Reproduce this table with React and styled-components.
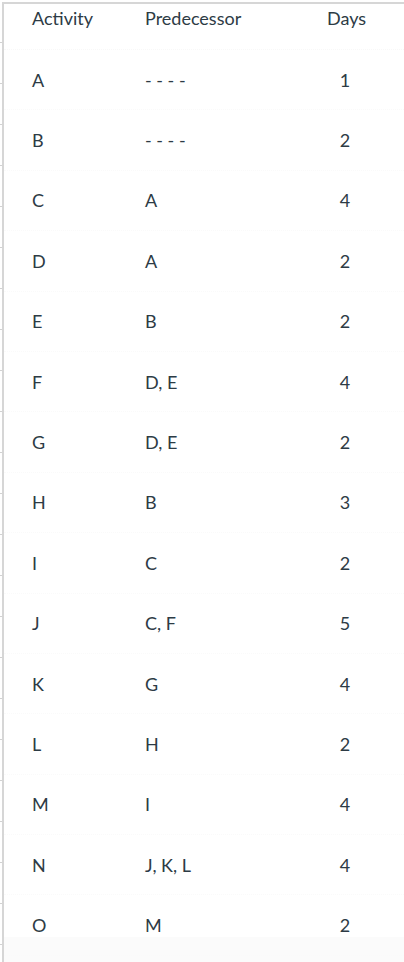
import React from "react";
import styled, { createGlobalStyle } from "styled-components";

const rows = [
  { activity: "A", pred: "- - - -", days: 1 },
  { activity: "B", pred: "- - - -", days: 2 },
  { activity: "C", pred: "A", days: 4 },
  { activity: "D", pred: "A", days: 2 },
  { activity: "E", pred: "B", days: 2 },
  { activity: "F", pred: "D, E", days: 4 },
  { activity: "G", pred: "D, E", days: 2 },
  { activity: "H", pred: "B", days: 3 },
  { activity: "I", pred: "C", days: 2 },
  { activity: "J", pred: "C, F", days: 5 },
  { activity: "K", pred: "G", days: 4 },
  { activity: "L", pred: "H", days: 2 },
  { activity: "M", pred: "I", days: 4 },
  { activity: "N", pred: "J, K, L", days: 4 },
  { activity: "O", pred: "M", days: 2 },
];

export default function App() {
  return (
    <>
      <GlobalStyle />
      <Page>
        <Gutter />
        <Frame>
          <Table>
            <HeadRow>
              <Cell $first>Activity</Cell>
              <Cell>Predecessor</Cell>
              <Cell>Days</Cell>
            </HeadRow>
            {rows.map((row) => (
              <Row key={row.activity}>
                <Cell $first>{row.activity}</Cell>
                <Cell>{row.pred}</Cell>
                <DaysCell>{row.days}</DaysCell>
              </Row>
            ))}
          </Table>
        </Frame>
      </Page>
    </>
  );
}

const GlobalStyle = createGlobalStyle`
  html, body {
    margin: 0;
    padding: 0;
    background: #fff;
  }
  body {
    font-family: Lato, "Open Sans", "Liberation Sans", sans-serif;
    color: #2d3b45;
  }
`;

const Page = styled.div`
  display: flex;
  height: 962px;
  padding-top: 2px;
  box-sizing: border-box;
  overflow: hidden;
`;

const Gutter = styled.div`
  width: 2px;
  flex-shrink: 0;
  background: repeating-linear-gradient(
    to bottom,
    transparent 0 40px,
    #d2d2d2 40px 41px
  );
`;

const Frame = styled.div`
  flex: 1;
  border-left: 2px solid #d6d6d6;
  border-top: 2px solid #d6d6d6;
  background: linear-gradient(to bottom, #fff 933px, #fbfbfb 933px);
`;

const Table = styled.div`
  display: flex;
  flex-direction: column;
`;

const HeadRow = styled.div`
  display: grid;
  grid-template-columns: 141px 182px 36px 1fr;
  height: 46px;
  padding-top: 1px;
  box-sizing: border-box;
  line-height: 26px;
  border-bottom: 1px dotted #f8f8f8;
`;

const Row = styled.div`
  display: grid;
  grid-template-columns: 141px 182px 36px 1fr;
  align-items: center;
  height: 60.4px;
  border-bottom: 1px dotted #fafafa;
  box-sizing: border-box;
`;

const Cell = styled.div`
  font-size: 18px;
  padding-left: ${(p) => (p.$first ? "28px" : "0")};
  white-space: nowrap;
`;

const DaysCell = styled(Cell)`
  text-align: center;
`;
